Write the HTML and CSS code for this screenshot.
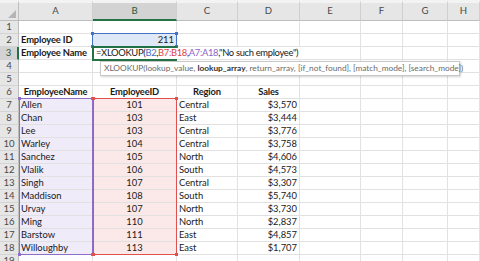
FILE: index.html
```html
<!DOCTYPE html>
<html>
<head>
<meta charset="utf-8">
<link rel="stylesheet" href="styles.css">
</head>
<body>
<div class="sheet">
  <div class="corner"></div>
  <div class="ch">A</div><div class="ch sel">B</div><div class="ch">C</div><div class="ch">D</div><div class="ch">E</div><div class="ch">F</div><div class="ch">G</div><div class="ch">H</div>

  <div class="rh">1</div><div class="c"></div><div class="c"></div><div class="c"></div><div class="c"></div><div class="c"></div><div class="c"></div><div class="c"></div><div class="c"></div>

  <div class="rh">2</div><div class="c b">Employee ID</div><div class="c r blue">211</div><div class="c"></div><div class="c"></div><div class="c"></div><div class="c"></div><div class="c"></div><div class="c"></div>

  <div class="rh sel">3</div><div class="c b">Employee Name</div><div class="c formula">=XLOOKUP(<span class="fb">B2</span>,<span class="fr">B7:B18</span>,<span class="fp">A7:A18</span>,"No such employee")</div><div class="c"></div><div class="c"></div><div class="c"></div><div class="c"></div>

  <div class="rh">4</div><div class="c"></div><div class="c"></div><div class="c"></div><div class="c"></div><div class="c"></div><div class="c"></div><div class="c"></div><div class="c"></div>

  <div class="rh">5</div><div class="c"></div><div class="c"></div><div class="c"></div><div class="c"></div><div class="c"></div><div class="c"></div><div class="c"></div><div class="c"></div>

  <div class="rh">6</div><div class="c b ctr">EmployeeName</div><div class="c b ctr">EmployeeID</div><div class="c b ctr">Region</div><div class="c b ctr">Sales</div><div class="c"></div><div class="c"></div><div class="c"></div><div class="c"></div>

  <div class="rh">7</div><div class="c pur">Allen</div><div class="c ctr red">101</div><div class="c">Central</div><div class="c r">$3,570</div><div class="c"></div><div class="c"></div><div class="c"></div><div class="c"></div>
  <div class="rh">8</div><div class="c pur">Chan</div><div class="c ctr red">103</div><div class="c">East</div><div class="c r">$3,444</div><div class="c"></div><div class="c"></div><div class="c"></div><div class="c"></div>
  <div class="rh">9</div><div class="c pur">Lee</div><div class="c ctr red">103</div><div class="c">Central</div><div class="c r">$3,776</div><div class="c"></div><div class="c"></div><div class="c"></div><div class="c"></div>
  <div class="rh">10</div><div class="c pur">Warley</div><div class="c ctr red">104</div><div class="c">Central</div><div class="c r">$3,758</div><div class="c"></div><div class="c"></div><div class="c"></div><div class="c"></div>
  <div class="rh">11</div><div class="c pur">Sanchez</div><div class="c ctr red">105</div><div class="c">North</div><div class="c r">$4,606</div><div class="c"></div><div class="c"></div><div class="c"></div><div class="c"></div>
  <div class="rh">12</div><div class="c pur">Vlalik</div><div class="c ctr red">106</div><div class="c">South</div><div class="c r">$4,573</div><div class="c"></div><div class="c"></div><div class="c"></div><div class="c"></div>
  <div class="rh">13</div><div class="c pur">Singh</div><div class="c ctr red">107</div><div class="c">Central</div><div class="c r">$3,307</div><div class="c"></div><div class="c"></div><div class="c"></div><div class="c"></div>
  <div class="rh">14</div><div class="c pur">Maddison</div><div class="c ctr red">108</div><div class="c">South</div><div class="c r">$5,740</div><div class="c"></div><div class="c"></div><div class="c"></div><div class="c"></div>
  <div class="rh">15</div><div class="c pur">Urvay</div><div class="c ctr red">107</div><div class="c">North</div><div class="c r">$3,730</div><div class="c"></div><div class="c"></div><div class="c"></div><div class="c"></div>
  <div class="rh">16</div><div class="c pur">Ming</div><div class="c ctr red">110</div><div class="c">North</div><div class="c r">$2,837</div><div class="c"></div><div class="c"></div><div class="c"></div><div class="c"></div>
  <div class="rh">17</div><div class="c pur">Barstow</div><div class="c ctr red">111</div><div class="c">East</div><div class="c r">$4,857</div><div class="c"></div><div class="c"></div><div class="c"></div><div class="c"></div>
  <div class="rh">18</div><div class="c pur">Willoughby</div><div class="c ctr red">113</div><div class="c">East</div><div class="c r">$1,707</div><div class="c"></div><div class="c"></div><div class="c"></div><div class="c"></div>
  <div class="rh last">19</div><div class="c"></div><div class="c"></div><div class="c"></div><div class="c"></div><div class="c"></div><div class="c"></div><div class="c"></div><div class="c"></div>

  <div class="range rng-blue"><i class="h tl"></i><i class="h tr"></i><i class="h bl"></i><i class="h br"></i></div>
  <div class="range rng-pur"><i class="h tl"></i><i class="h tr"></i><i class="h bl"></i><i class="h br"></i></div>
  <div class="range rng-red"><i class="h tl"></i><i class="h tr"></i><i class="h bl"></i><i class="h br"></i></div>
  <div class="active"></div>

  <div class="tip">XLOOKUP(lookup_value, <b>lookup_array</b>, return_array, [if_not_found], [match_mode], [search_mode])</div>
</div>
</body>
</html>
```

FILE: styles.css
```css
html, body {
  margin: 0;
  padding: 0;
  background: #ffffff;
  overflow: hidden;
}

.sheet {
  position: relative;
  display: grid;
  grid-template-columns: 19px 74px 84px 61px 62px 61px 42px 45px 32px;
  grid-template-rows: 21px repeat(19, 13px);
  font-family: Lato, "Liberation Sans", sans-serif;
  font-size: 9.4px;
  color: #1a1a1a;
  width: 480px;
  height: 261px;
  overflow: hidden;
}

.corner, .ch {
  box-sizing: border-box;
  background: #e6e6e6;
  border-top: 3px solid #f3f3f3;
  border-right: 1px solid #cfcfcf;
  border-bottom: 1px solid #bdbdbd;
}

.corner {
  position: relative;
  border-right-color: #bdbdbd;
}

.corner::after {
  content: "";
  position: absolute;
  right: 2px;
  bottom: 2px;
  width: 8px;
  height: 8px;
  background: #b5b5b5;
  clip-path: polygon(100% 0, 100% 100%, 0 100%);
}

.ch {
  text-align: center;
  color: #4a4a4a;
  font-size: 9.6px;
  line-height: 16px;
}

.ch.sel {
  background: #d3d3d3;
  color: #1f5c38;
  border-bottom: 2px solid #217346;
  line-height: 15px;
}

.rh {
  box-sizing: border-box;
  background: #e6e6e6;
  border-right: 1px solid #bdbdbd;
  border-bottom: 1px solid #d4d4d4;
  text-align: center;
  color: #4a4a4a;
  font-size: 9.6px;
  line-height: 12px;
}

.rh.sel {
  background: #d3d3d3;
  color: #1f5c38;
  border-right: 2px solid #217346;
}

.c {
  box-sizing: border-box;
  border-right: 1px solid #e1e1e1;
  border-bottom: 1px solid #e1e1e1;
  padding: 0 2px;
  line-height: 12px;
  white-space: nowrap;
  overflow: hidden;
}

.b { font-weight: 700; letter-spacing: -0.15px; }
.r { text-align: right; }
.ctr { text-align: center; }

.blue { background: #dfe8f6; }
.pur { background: #efebf8; }
.red { background: #fbe8e8; }

.formula {
  grid-column: 3 / span 3;
  background: #ffffff;
  padding-left: 3px;
  letter-spacing: -0.32px;
  overflow: visible;
  border-right-color: transparent;
}

.fb { color: #3f6fc4; }
.fr { color: #d9423f; }
.fp { color: #8a64c8; }

.range {
  position: absolute;
  box-sizing: border-box;
  inset: -1px 0 0 -1px;
  border: 1px solid;
  pointer-events: none;
}

.rng-blue { grid-column: 3 / 4; grid-row: 3 / 4; border-color: #4472c4; }
.rng-pur { grid-column: 2 / 3; grid-row: 8 / 20; border-color: #8e6fc9; inset: -1px 0 0 0; }
.rng-red { grid-column: 3 / 4; grid-row: 8 / 20; border-color: #e0504f; inset: -1px 0 0 0; }

.h {
  position: absolute;
  width: 3px;
  height: 3px;
}
.rng-blue .h { background: #4472c4; }
.rng-pur .h { background: #8e6fc9; }
.rng-red .h { background: #e0504f; }
.tl { left: -2px; top: -2px; }
.tr { right: -2px; top: -2px; }
.bl { left: -2px; bottom: -2px; }
.br { right: -2px; bottom: -2px; }

.active {
  position: absolute;
  box-sizing: border-box;
  grid-column: 3 / 4;
  grid-row: 4 / 5;
  inset: -1px 0 -1px -1px;
  border: 2px solid #217346;
  border-right: none;
  pointer-events: none;
}

.tip {
  position: absolute;
  left: 100px;
  top: 61px;
  width: 360px;
  height: 15px;
  box-sizing: border-box;
  padding: 0 3px;
  background: #ffffff;
  border: 1px solid #c8c8c8;
  box-shadow: 1px 1px 2px rgba(0, 0, 0, 0.18);
  color: #6b6b6b;
  font-size: 8.3px;
  line-height: 13px;
  white-space: nowrap;
}

.tip b {
  color: #333333;
  font-weight: 700;
}
```
